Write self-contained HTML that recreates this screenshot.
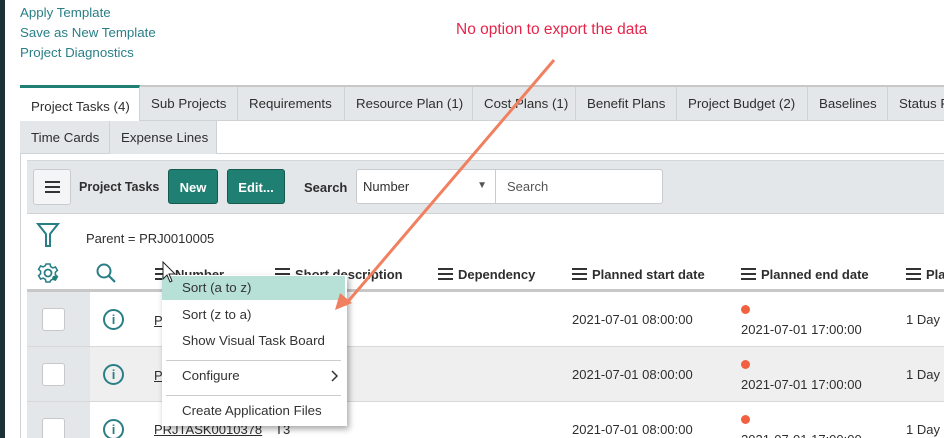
<!DOCTYPE html>
<html><head><style>
*{box-sizing:border-box;margin:0;padding:0}
html,body{width:944px;height:438px;overflow:hidden}
body{background:#fff;font-family:"Liberation Sans",sans-serif;font-size:13px;color:#2e2e2e;position:relative}
.a{position:absolute}
.lnk{color:#2a7f86;font-size:13.3px}
.tab{position:absolute;top:87px;height:34px;background:#e4e7ea;border-right:1px solid #cfd3d6;border-bottom:1px solid #cfd3d6;padding:9px 0 0 11px;font-size:13.3px;white-space:nowrap;overflow:hidden}
.tab2{top:121px;height:33px}
.btn{position:absolute;top:169px;height:35px;background:#1f7f72;border:1px solid #16594f;border-radius:3px;color:#fff;font-weight:bold;font-size:13px;text-align:center;padding-top:10px}
.hd{position:absolute;top:267px;font-weight:bold;font-size:13px;white-space:nowrap}
.hb{display:inline-block;width:15px;height:12px;border-top:2px solid #333;border-bottom:2px solid #333;position:relative;margin-right:5px;vertical-align:-1px}
.hb:after{content:"";position:absolute;left:0;right:0;top:3px;border-top:2px solid #333}
.cb{position:absolute;left:42px;width:23px;height:23px;border:1px solid #c8c8c8;border-radius:3px;background:#fff}
.info{position:absolute;left:103px;width:21px;height:21px;border:2px solid #2a7f86;border-radius:50%;color:#2a7f86;font-size:13px;text-align:center;line-height:17px;font-weight:bold}
.dot{position:absolute;width:9px;height:9px;border-radius:50%;background:#f2613f}
.mi{position:absolute;left:182px;font-size:13.3px;color:#333}
</style></head><body>
<div class="a" style="left:0;top:0;width:5px;height:438px;background:#1e3236"></div>
<div class="a lnk" style="left:20px;top:5px">Apply Template</div>
<div class="a lnk" style="left:20px;top:25px">Save as New Template</div>
<div class="a lnk" style="left:20px;top:45px">Project Diagnostics</div>
<div class="a" style="left:456px;top:21px;color:#e8234a;font-size:15.5px">No option to export the data</div>

<div class="a" style="left:20px;top:85px;width:924px;height:3px;background:#c8c8c8"></div>
<div class="a" style="left:20px;top:85px;width:1px;height:353px;background:#d0d3d6"></div>
<div class="tab" style="left:20px;width:120px;background:#fff;border-bottom:none;border-top:3px solid #1f7f72;top:85px;height:36px;padding-top:11px">Project Tasks (4)</div>
<div class="tab" style="left:140px;width:98px">Sub Projects</div>
<div class="tab" style="left:238px;width:107px">Requirements</div>
<div class="tab" style="left:345px;width:128px">Resource Plan (1)</div>
<div class="tab" style="left:473px;width:103px">Cost Plans (1)</div>
<div class="tab" style="left:576px;width:101px">Benefit Plans</div>
<div class="tab" style="left:677px;width:131px">Project Budget (2)</div>
<div class="tab" style="left:808px;width:80px">Baselines</div>
<div class="tab" style="left:888px;width:56px;border-right:none">Status Reports</div>
<div class="tab tab2" style="left:20px;width:90px">Time Cards</div>
<div class="tab tab2" style="left:110px;width:107px;border-bottom:none">Expense Lines</div>
<div class="a" style="left:217px;top:153px;width:727px;height:1px;background:#cfd3d6"></div>

<div class="a" style="left:27px;top:160px;width:917px;height:54px;background:#e4e7ea;border-top:1px solid #d4d8db;border-bottom:1px solid #cfd3d6"></div>
<div class="a" style="left:33px;top:169px;width:38px;height:36px;background:#f4f5f6;border:1px solid #c8cccf;border-radius:3px"></div>
<div class="a" style="left:45px;top:181px;width:15px;height:12px;border-top:2px solid #333;border-bottom:2px solid #333"></div>
<div class="a" style="left:45px;top:186px;width:15px;height:2px;background:#333"></div>
<div class="a" style="left:79px;top:180px;font-weight:bold;font-size:12.5px">Project Tasks</div>
<div class="btn" style="left:168px;width:50px">New</div>
<div class="btn" style="left:227px;width:58px">Edit...</div>
<div class="a" style="left:304px;top:180px;font-weight:bold">Search</div>
<div class="a" style="left:356px;top:169px;width:140px;height:35px;background:#fff;border:1px solid #c8cccf;border-radius:3px 0 0 3px;padding:9px 0 0 6px">Number<span style="position:absolute;right:8px;top:10px;font-size:10px;color:#555">▼</span></div>
<div class="a" style="left:495px;top:169px;width:168px;height:35px;background:#fff;border:1px solid #c8cccf;border-radius:0 3px 3px 0;padding:9px 0 0 11px;color:#555">Search</div>

<svg class="a" style="left:36px;top:222px" width="24" height="26" viewBox="0 0 24 26"><path d="M2 2H22L14 12V24H10V12Z" fill="none" stroke="#2a7f86" stroke-width="2"/></svg>
<div class="a" style="left:86px;top:231px">Parent = PRJ0010005</div>

<svg class="a" style="left:37px;top:262px" width="22" height="22" viewBox="0 0 22 22"><circle cx="11" cy="11" r="3.5" fill="none" stroke="#2a7f86" stroke-width="1.8"/><path d="M9 2h4l.6 2.6 2.3 1.3 2.5-.9 2 3.4-2 1.8v2.6l2 1.8-2 3.4-2.5-.9-2.3 1.3L13 20H9l-.6-2.6-2.3-1.3-2.5.9-2-3.4 2-1.8V9.2l-2-1.8 2-3.4 2.5.9 2.3-1.3Z" fill="none" stroke="#2a7f86" stroke-width="1.6"/><circle cx="17.5" cy="16" r="2.3" fill="#1f7f72"/></svg>
<svg class="a" style="left:95px;top:262px" width="22" height="22" viewBox="0 0 22 22"><circle cx="9" cy="9" r="6.5" fill="none" stroke="#2a7f86" stroke-width="2"/><path d="M14 14l6 6" stroke="#2a7f86" stroke-width="2.2"/></svg>
<div class="hd" style="left:155px"><span class="hb"></span>Number</div>
<div class="hd" style="left:275px"><span class="hb"></span>Short description</div>
<div class="hd" style="left:438px"><span class="hb"></span>Dependency</div>
<div class="hd" style="left:572px"><span class="hb"></span>Planned start date</div>
<div class="hd" style="left:741px"><span class="hb"></span>Planned end date</div>
<div class="hd" style="left:906px;width:38px;overflow:hidden"><span class="hb"></span>Planned duration</div>
<div class="a" style="left:27px;top:289px;width:917px;height:3px;background:#c8c8c8"></div>

<div class="a" style="left:27px;top:292px;width:63px;height:146px;background:#e4e7ea"></div>
<div class="a" style="left:90px;top:347px;width:854px;height:54px;background:#efefef"></div>
<div class="a" style="left:27px;top:346px;width:917px;height:1px;background:#d8d8d8"></div>
<div class="a" style="left:27px;top:401px;width:917px;height:1px;background:#d8d8d8"></div>
<div class="cb" style="top:308px"></div><div class="cb" style="top:363px"></div><div class="cb" style="top:418px"></div>
<div class="info" style="top:309px">i</div><div class="info" style="top:364px">i</div><div class="info" style="top:419px">i</div>
<div class="a" style="left:154px;top:313px;text-decoration:underline">P</div>
<div class="a" style="left:154px;top:368px;text-decoration:underline">P</div>
<div class="a" style="left:154px;top:422px;text-decoration:underline">PRJTASK0010378</div>
<div class="a" style="left:275px;top:422px">T3</div>
<div class="a" style="left:572px;top:312px">2021-07-01 08:00:00</div>
<div class="a" style="left:572px;top:367px">2021-07-01 08:00:00</div>
<div class="a" style="left:572px;top:422px">2021-07-01 08:00:00</div>
<div class="dot" style="left:741px;top:305px"></div><div class="dot" style="left:741px;top:360px"></div><div class="dot" style="left:741px;top:415px"></div>
<div class="a" style="left:741px;top:322px">2021-07-01 17:00:00</div>
<div class="a" style="left:741px;top:377px">2021-07-01 17:00:00</div>
<div class="a" style="left:741px;top:432px">2021-07-01 17:00:00</div>
<div class="a" style="left:906px;top:312px">1 Day</div>
<div class="a" style="left:906px;top:367px">1 Day</div>
<div class="a" style="left:906px;top:422px">1 Day</div>

<div class="a" style="left:162px;top:275px;width:185px;height:151px;background:#fff;box-shadow:2px 3px 6px rgba(0,0,0,.35)"></div>
<div class="a" style="left:162px;top:276px;width:183px;height:24px;background:#b7e0d6"></div>
<div class="mi" style="top:280px">Sort (a to z)</div>
<div class="mi" style="top:307px">Sort (z to a)</div>
<div class="mi" style="top:333px">Show Visual Task Board</div>
<div class="a" style="left:166px;top:360px;width:175px;height:1px;background:#ccc"></div>
<div class="mi" style="top:368px">Configure</div>
<svg class="a" style="left:329px;top:370px" width="10" height="12" viewBox="0 0 10 12"><path d="M3 1l5 5-5 5" fill="none" stroke="#333" stroke-width="1.5"/></svg>
<div class="a" style="left:166px;top:395px;width:175px;height:1px;background:#ccc"></div>
<div class="mi" style="top:403px">Create Application Files</div>

<svg class="a" style="left:0;top:0" width="944" height="438"><line x1="554" y1="60" x2="345" y2="305" stroke="#f08060" stroke-width="3"/><path d="M335 310L340 293L352 303Z" fill="#f08060"/>
<path d="M163 262v17l4-4 3 7 2-1-3-7h6Z" fill="#fff" stroke="#222" stroke-width="1"/></svg>
</body></html>
